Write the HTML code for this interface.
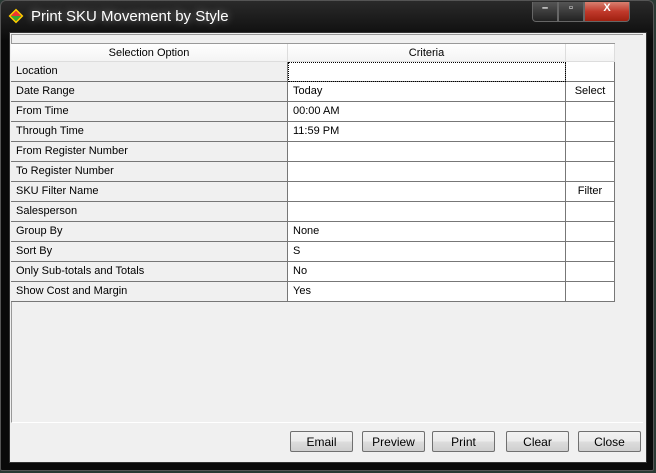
<!DOCTYPE html>
<html><head><style>
*{margin:0;padding:0;box-sizing:border-box}
body{width:656px;height:473px;background:#2a3a34;position:relative;overflow:hidden;font-family:"Liberation Sans",sans-serif;font-size:11px;color:#000}
.win{position:absolute;left:0;top:0;width:654px;height:471px;background:linear-gradient(#2a2a2a,#0a0a0a 40px);border:1px solid #555;border-radius:6px 6px 2px 2px}
.title{position:absolute;left:30px;top:7px;color:#fff;font-size:15px;text-shadow:0 0 8px #fff8}
.icon{position:absolute;left:8px;top:8px;width:14px;height:14px;transform:rotate(45deg) scale(.75);background:linear-gradient(135deg,#e33 0 50%,#3a3 50%);border:2px solid #fc0}
.tb{position:absolute;top:1px;height:20px;border:1px solid #666;border-top:none;background:linear-gradient(#555,#222);color:#fff;text-align:center;font-weight:bold}
.client{position:absolute;left:8px;top:31px;width:638px;height:431px;background:#f0f0f0;border:1px solid #333}
.panel{position:absolute;left:1px;top:1px;width:632px;height:389px;border-left:1px solid #999;border-top:1px solid #999;border-bottom:1px solid #fff;background:#f0f0f0}
.grid{position:absolute;left:-1px;top:8px;border-top:1px solid #999}
.row{display:flex;height:20px}
.c{border-right:1px solid #777;border-bottom:1px solid #777;padding:3px 5px 0;white-space:nowrap;height:20px}
.c1{width:277px;background:#f0f0f0}.c2{width:278px;background:#fff}.c3{width:49px;background:#fff;text-align:center;padding:3px 0 0}
.hdr .c{background:linear-gradient(#fff,#f4f4f4);text-align:center;border-bottom:1px solid #ddd;border-right:1px solid #ddd;height:18px}
.hdr{height:18px}
.btn{position:absolute;top:398px;height:21px;width:63px;border:1px solid #707070;border-radius:2px;background:linear-gradient(#f2f2f2,#ebebeb 50%,#dddddd 50%,#cfcfcf);text-align:center;font-size:12px;padding-top:3px}
</style></head><body>
<div class="win">
<div class="icon"></div>
<div class="title">Print SKU Movement by Style</div>
<div class="tb" style="left:531px;width:26px;border-radius:0 0 0 4px">–</div>
<div class="tb" style="left:557px;width:26px">▫</div>
<div class="tb" style="left:583px;width:46px;background:linear-gradient(#d88070,#c0392b 50%,#a02010);border-radius:0 0 4px 0">X</div>
<div class="client">
<div class="panel">
<div class="grid">
<div class="row hdr"><div class="c c1">Selection Option</div><div class="c c2">Criteria</div><div class="c c3"></div></div>
<div class="row"><div class="c c1">Location</div><div class="c c2" style="outline:1px dotted #000;outline-offset:-1px"></div><div class="c c3"></div></div>
<div class="row"><div class="c c1">Date Range</div><div class="c c2">Today</div><div class="c c3">Select</div></div>
<div class="row"><div class="c c1">From Time</div><div class="c c2">00:00 AM</div><div class="c c3"></div></div>
<div class="row"><div class="c c1">Through Time</div><div class="c c2">11:59 PM</div><div class="c c3"></div></div>
<div class="row"><div class="c c1">From Register Number</div><div class="c c2"></div><div class="c c3"></div></div>
<div class="row"><div class="c c1">To Register Number</div><div class="c c2"></div><div class="c c3"></div></div>
<div class="row"><div class="c c1">SKU Filter Name</div><div class="c c2"></div><div class="c c3">Filter</div></div>
<div class="row"><div class="c c1">Salesperson</div><div class="c c2"></div><div class="c c3"></div></div>
<div class="row"><div class="c c1">Group By</div><div class="c c2">None</div><div class="c c3"></div></div>
<div class="row"><div class="c c1">Sort By</div><div class="c c2">S</div><div class="c c3"></div></div>
<div class="row"><div class="c c1">Only Sub-totals and Totals</div><div class="c c2">No</div><div class="c c3"></div></div>
<div class="row"><div class="c c1">Show Cost and Margin</div><div class="c c2">Yes</div><div class="c c3"></div></div>
</div>
</div>
<div class="btn" style="left:280px">Email</div>
<div class="btn" style="left:352px">Preview</div>
<div class="btn" style="left:422px">Print</div>
<div class="btn" style="left:496px">Clear</div>
<div class="btn" style="left:568px">Close</div>
</div>
</div>
</body></html>
